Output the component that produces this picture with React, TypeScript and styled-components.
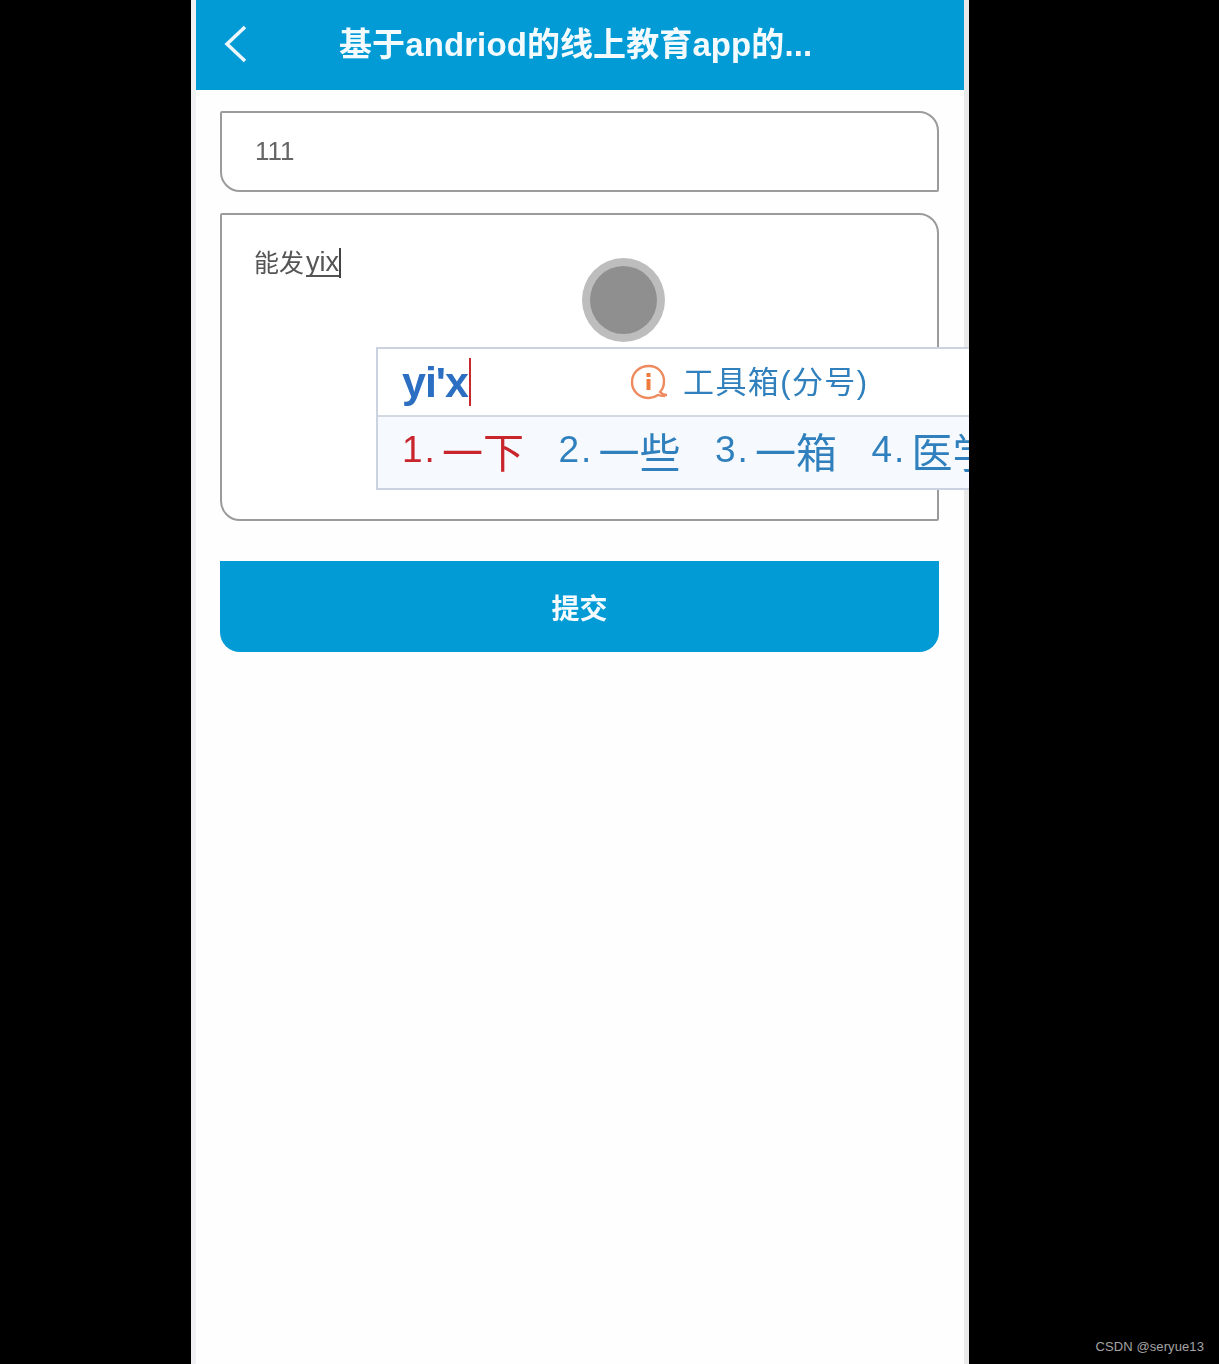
import { FC } from "react";
import styled, { createGlobalStyle } from "styled-components";

const GlobalStyle = createGlobalStyle`
    html, body {
        margin: 0;
        padding: 0;
        background: #000;
    }
    body {
        font-family: "Liberation Sans", "Noto Sans CJK SC", sans-serif;
    }
`;

const Page = styled.div`
    position: relative;
    width: 1219px;
    height: 1364px;
    overflow: hidden;
    background: #000;
    padding-left: 191px;
    box-sizing: border-box;
`;

const Phone = styled.div`
    position: relative;
    width: 778px;
    height: 1364px;
    box-sizing: border-box;
    padding: 0 5px;
    background: #fefefe;
    box-shadow: inset 5px 0 #f1f1f3, inset -5px 0 #e9e9ea;
    overflow: hidden;
`;

const Header = styled.header`
    display: flex;
    align-items: center;
    height: 90px;
    padding-left: 27px;
    background: #029bd6;
    box-sizing: border-box;
`;

const BackIcon = styled.svg`
    width: 26px;
    height: 42px;
    flex: none;
    margin-bottom: 2px;
    filter: blur(0.4px);
`;

const Title = styled.h1`
    margin: 0 0 0 90px;
    font-size: 33px;
    line-height: 90px;
    font-weight: 700;
    letter-spacing: 0.1px;
    color: #f4fbfe;
    white-space: nowrap;
    filter: blur(0.5px);
`;

const Form = styled.div`
    display: flex;
    flex-direction: column;
    padding: 21px 25px 0 24px;
`;

const Field = styled.div<{ $height: number; $mb: number }>`
    height: ${(p) => p.$height}px;
    margin-bottom: ${(p) => p.$mb}px;
    box-sizing: border-box;
    border: 2px solid #9b9b9d;
    border-radius: 2px 20px 2px 20px;
    padding-left: 33px;
    background: #fff;
    filter: blur(0.3px);
`;

const NameValue = styled.div`
    font-size: 26px;
    line-height: 77px;
    color: #666;
`;

const BodyValue = styled.div`
    display: flex;
    align-items: center;
    margin-left: -1px;
    padding-top: 30px;
    font-size: 25px;
    line-height: 36px;
    color: #555;
`;

const Composing = styled.span`
    margin-left: 2px;
    font-size: 27px;
    border-bottom: 2px solid #555;
    line-height: 26px;
`;

const Caret = styled.span`
    width: 2px;
    height: 30px;
    background: #444;
`;

const Submit = styled.button`
    height: 91px;
    border: none;
    border-radius: 0 0 20px 20px;
    background: #029bd6;
    color: #f4fbfe;
    font-family: inherit;
    font-size: 28px;
    font-weight: 700;
    filter: blur(0.4px);
`;

const TouchDot = styled.div`
    position: absolute;
    left: 391px;
    top: 258px;
    width: 83px;
    height: 84px;
    border-radius: 50%;
    box-sizing: border-box;
    border: 8px solid #bdbdbd;
    background: #8f8f90;
    filter: blur(0.6px);
`;

const Ime = styled.div`
    position: absolute;
    left: 185px;
    top: 347px;
    width: 640px;
    height: 143px;
    box-sizing: border-box;
    border: 2px solid #cbd3e0;
    background: #fff;
`;

const ImeTop = styled.div`
    display: flex;
    align-items: center;
    height: 68px;
    padding-left: 24px;
    border-bottom: 2px solid #d3d9e2;
    box-sizing: border-box;
`;

const Pinyin = styled.span`
    font-size: 43px;
    font-weight: 700;
    letter-spacing: -1px;
    color: #2c6fc2;
    filter: blur(0.4px);
`;

const ImeCaret = styled.span`
    width: 2px;
    height: 48px;
    margin-left: 1px;
    background: #c9282d;
`;

const TipIcon = styled.svg`
    width: 40px;
    height: 38px;
    margin-left: 158px;
    flex: none;
    filter: blur(0.3px);
`;

const ToolHint = styled.span`
    margin: 0 0 6px 14px;
    font-size: 31px;
    letter-spacing: 1.4px;
    white-space: nowrap;
    color: #2f80bd;
    filter: blur(0.3px);
`;

const Candidates = styled.div`
    display: flex;
    align-items: center;
    height: 71px;
    padding: 0 0 6px 24px;
    box-sizing: border-box;
    background: #f6f9fd;
`;

const Candidate = styled.span<{ $active?: boolean }>`
    display: flex;
    align-items: center;
    flex: none;
    width: 156.5px;
    font-size: 41px;
    white-space: nowrap;
    color: ${(p) => (p.$active ? "#c8262c" : "#2f80bd")};
    filter: blur(0.3px);
`;

const CandidateNum = styled.span`
    width: 40px;
    font-size: 37px;
    letter-spacing: 2px;
`;

const Watermark = styled.div`
    position: absolute;
    right: 15px;
    bottom: 9px;
    font-size: 13px;
    line-height: 17px;
    letter-spacing: 0.1px;
    color: #a4a4a4;
`;

const candidates = [
    { num: "1.", word: "一下" },
    { num: "2.", word: "一些" },
    { num: "3.", word: "一箱" },
    { num: "4.", word: "医学" },
];

const App: FC = () => {
    return (
        <Page>
            <GlobalStyle />
            <Phone>
                <Header>
                    <BackIcon viewBox="0 0 26 42">
                        <path d="M22 4 L4 21 L22 38" fill="none" stroke="#eef8fc" strokeWidth="3.5" />
                    </BackIcon>
                    <Title>基于andriod的线上教育app的...</Title>
                </Header>
                <Form>
                    <Field $height={81} $mb={21}>
                        <NameValue>111</NameValue>
                    </Field>
                    <Field $height={308} $mb={40}>
                        <BodyValue>
                            能发<Composing>yix</Composing>
                            <Caret />
                        </BodyValue>
                    </Field>
                    <Submit>提交</Submit>
                </Form>
                <TouchDot />
                <Ime>
                    <ImeTop>
                        <Pinyin>yi'x</Pinyin>
                        <ImeCaret />
                        <TipIcon viewBox="0 0 40 38">
                            <path
                                d="M36 33 C33 33 31 33 29 32 C26 34 23 35 20 35 C10 35 3 28 3 19 C3 10 10 3 20 3 C29 3 35 10 35 18 C35 23 33 27 31 29 C33 31 35 32 38 32"
                                fill="none"
                                stroke="#ee8a5e"
                                strokeWidth="2.4"
                            />
                            <rect x="17.5" y="10" width="4" height="4" fill="#ee7a3e" />
                            <rect x="17.5" y="16" width="4" height="11" fill="#ee7a3e" />
                        </TipIcon>
                        <ToolHint>工具箱(分号)</ToolHint>
                    </ImeTop>
                    <Candidates>
                        {candidates.map((c, i) => (
                            <Candidate key={c.num} $active={i === 0}>
                                <CandidateNum>{c.num}</CandidateNum>
                                {c.word}
                            </Candidate>
                        ))}
                    </Candidates>
                </Ime>
            </Phone>
            <Watermark>CSDN @seryue13</Watermark>
        </Page>
    );
};

export default App;
